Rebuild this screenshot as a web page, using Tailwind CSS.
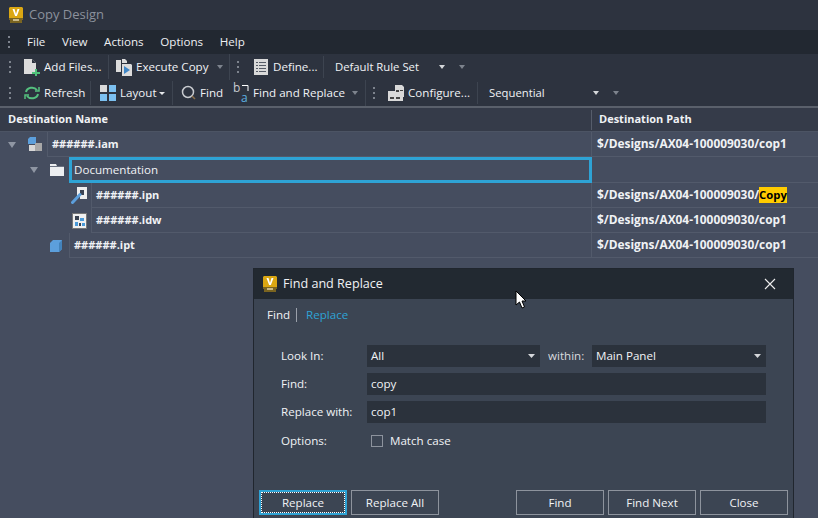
<!DOCTYPE html>
<html><head><meta charset="utf-8">
<script src="https://cdn.jsdelivr.net/npm/@tailwindcss/browser@4"></script>
</head>
<body class="w-[818px] h-[518px] overflow-hidden bg-[#454d5f] relative font-['Open_Sans','Noto_Sans',sans-serif] text-[11.6px] text-[#f0f2f5]">
<!-- title -->
<div class="h-[30px] bg-[#2d333f] flex items-center pl-[9px] gap-[6px]">
  <svg width="14" height="16" viewBox="0 0 14 16"><path d="M1 0h12l1 1v11l-1 1v2l-1 1H2l-1-1v-2l-1-1V1z" fill="#dba713"/><path d="M0 11h14v1l-1 1v2l-1 1H2l-1-1v-2l-1-1z" fill="#7a6420"/><path d="M3.500 2h2l1.500 5 1.500-5h2l-2.600 7H6.100z" fill="#fff"/><rect x="4" y="12" width="6" height="2" fill="#c9b98a"/></svg>
  <span class="text-[13px] text-[#8b919c]">Copy Design</span>
</div>
<!-- menu -->
<div class="h-[24px] bg-[#222831] flex items-center pl-[7px]">
  <svg width="4" height="12" class="mr-[16px]"><g fill="#7d838d"><rect x="1" width="2" height="2"/><rect x="1" y="5" width="2" height="2"/><rect x="1" y="10" width="2" height="2"/></g></svg>
  <div class="flex gap-[16.700px] text-[#eef0f3]"><span>File</span><span>View</span><span>Actions</span><span>Options</span><span>Help</span></div>
</div>
<!-- toolbar 1 -->
<div class="h-[26px] bg-[#2d333f] flex items-center pl-[8px] whitespace-nowrap">
  <svg width="4" height="12"><g fill="#7d838d"><rect x="1" width="2" height="2"/><rect x="1" y="5" width="2" height="2"/><rect x="1" y="10" width="2" height="2"/></g></svg>
  <svg width="16" height="17" viewBox="0 0 16 17" class="ml-[12px]"><path d="M0 0h8l4 4v11H0z" fill="#dcdcdc"/><path d="M8 0v4h4z" fill="#2d333f"/><path d="M11 10h2v3h3v2h-3v2h-2v-2H8v-2h3z" fill="#4fc27a"/></svg>
  <span class="ml-[4px] w-[57px]">Add Files...</span>
  <div class="w-px h-[24px] bg-[#3d4450] ml-[7px]"></div>
  <svg width="17" height="17" viewBox="0 0 17 17" class="ml-[7px]"><path d="M0 1h5v12H0z" fill="#dcdcdc"/><path d="M6 0h3l2 2v2H6zM6 5h9l1 1v11H6z" fill="#dcdcdc"/><path d="M8 7v8l6-4z" fill="#3f86c6"/></svg>
  <span class="ml-[3px] w-[72px]">Execute Copy</span>
  <svg width="8" height="4" class="ml-[8px]"><path d="M1 0h6L4 4z" fill="#7d838d"/></svg>
  <div class="w-px h-[26px] bg-[#3d4450] ml-[5px]"></div>
  <svg width="4" height="12" class="ml-[6px]"><g fill="#7d838d"><rect x="1" width="2" height="2"/><rect x="1" y="5" width="2" height="2"/><rect x="1" y="10" width="2" height="2"/></g></svg>
  <svg width="14" height="16" viewBox="0 0 14 16" class="ml-[14px]"><rect width="14" height="16" fill="#d9d9d9"/><g fill="#555b66"><rect x="2" y="3" width="2" height="1"/><rect x="5" y="3" width="7" height="1"/><rect x="2" y="6" width="2" height="1"/><rect x="5" y="6" width="7" height="1"/><rect x="2" y="9" width="2" height="1"/><rect x="5" y="9" width="7" height="1"/><rect x="2" y="12" width="2" height="1"/><rect x="5" y="12" width="7" height="1"/></g></svg>
  <span class="ml-[5px] w-[43px]">Define...</span>
  <div class="w-px h-[22px] bg-[#3d4450] ml-[7px]"></div>
  <span class="ml-[11px] w-[103px] text-[11.300px]">Default Rule Set</span>
  <svg width="8" height="4"><path d="M1 0h6L4 4z" fill="#d5d7da"/></svg>
  <svg width="8" height="4" class="ml-[12px]"><path d="M1 0h6L4 4z" fill="#7d838d"/></svg>
</div>
<!-- toolbar 2 -->
<div class="h-[26px] bg-[#2d333f] flex items-center pl-[8px] whitespace-nowrap">
  <svg width="4" height="12"><g fill="#7d838d"><rect x="1" width="2" height="2"/><rect x="1" y="5" width="2" height="2"/><rect x="1" y="10" width="2" height="2"/></g></svg>
  <svg width="16" height="16" viewBox="0 0 16 16" class="ml-[12px]" fill="none" stroke="#55c07f" stroke-width="2"><path d="M2 7a6 5 0 0 1 11-2"/><path d="M14 9a6 5 0 0 1-11 2"/><path d="M15 2v4h-4M1 14v-4h4" stroke-width="1.500"/></svg>
  <span class="ml-[4px] w-[39px]">Refresh</span>
  <div class="w-px h-[24px] bg-[#3d4450] ml-[7px]"></div>
  <svg width="17" height="16" viewBox="0 0 17 16" class="ml-[9px]"><rect width="7" height="7" fill="#d9d9d9"/><rect x="9" width="7" height="7" fill="#7cc0f0"/><rect y="9" width="7" height="7" fill="#7cc0f0"/><rect x="9" y="9" width="7" height="7" fill="#7cc0f0"/></svg>
  <span class="ml-[3px] w-[36px]">Layout</span>
  <svg width="6" height="3" class="ml-[3px]"><path d="M0 0h6L3 3z" fill="#e6e8eb"/></svg>
  <div class="w-px h-[24px] bg-[#3d4450] ml-[7px]"></div>
  <svg width="15" height="16" viewBox="0 0 15 16" class="ml-[8px]" fill="none"><circle cx="7" cy="7" r="5.500" stroke="#c9ccd0" stroke-width="1.500"/><path d="M11 11l3 3" stroke="#8a6f4a" stroke-width="1.500"/></svg>
  <span class="ml-[4px] w-[23px]">Find</span>
  <div class="ml-[10px] w-[17px] h-[20px] flex flex-col relative">
    <span class="leading-[10px] text-[12px] text-[#c9ccd0]">b</span>
    <span class="leading-[10px] text-[12px] text-[#5db0e0] ml-[8px]">a</span>
    <svg width="7" height="6" class="absolute left-[9px] top-[2px]" fill="none" stroke="#fff"><path d="M0 .5h6V6"/></svg>
  </div>
  <span class="ml-[3px] w-[90px]">Find and Replace</span>
  <svg width="8" height="4" class="ml-[8px]"><path d="M1 0h6L4 4z" fill="#7d838d"/></svg>
  <div class="w-px h-[26px] bg-[#3d4450] ml-[6px]"></div>
  <svg width="4" height="12" class="ml-[6px]"><g fill="#7d838d"><rect x="1" width="2" height="2"/><rect x="1" y="5" width="2" height="2"/><rect x="1" y="10" width="2" height="2"/></g></svg>
  <svg width="17" height="16" viewBox="0 0 17 16" class="ml-[12px]"><path d="M3 6h4V0h7l2 2v10H0V6z" fill="#d9d9d9"/><rect x="0" y="10" width="15" height="6" fill="#d9d9d9"/><g fill="#444"><rect x="8" y="5" width="3" height="2"/><rect x="12" y="5" width="3" height="1"/><rect x="2" y="12" width="4" height="2"/><rect x="8" y="12" width="4" height="2"/></g></svg>
  <span class="ml-[3px] w-[62px]">Configure...</span>
  <div class="w-px h-[22px] bg-[#3d4450] ml-[7px]"></div>
  <span class="ml-[11px] w-[103px] text-[11.300px]">Sequential</span>
  <svg width="8" height="4"><path d="M1 0h6L4 4z" fill="#d5d7da"/></svg>
  <svg width="8" height="4" class="ml-[12px]"><path d="M1 0h6L4 4z" fill="#7d838d"/></svg>
</div>
<!-- grid -->
<div class="border-t-2 border-[#5a606b] h-[26px] bg-[#353b49] flex items-center font-bold text-[11px] border-b border-b-[#4c5464]">
  <div class="w-[591px] pl-[8px]">Destination Name</div>
  <div class="w-px h-[20px] bg-[#565d6b]"></div>
  <div class="pl-[7px]">Destination Path</div>
</div>
<div class="font-bold">
  <div class="h-[25px] flex">
    <div class="w-[591px] flex items-center">
      <svg width="8" height="6" class="ml-[8px]"><path d="M0 0h8L4 6z" fill="#8f96a3"/></svg>
      <svg width="14" height="15" viewBox="0 0 14 15" class="ml-[12px]"><path d="M0 2l2-2h6v7H0z" fill="#5c9fdc"/><rect x="1" y="8" width="6" height="6" fill="#d8d8d8"/><rect x="7" y="6" width="7" height="8" fill="#a8a8a8"/></svg>
      <div class="ml-[5px] h-full flex-1 flex items-center pl-[4px] border-l border-b border-[#525a6b] text-[11px]">######.iam</div>
    </div>
    <div class="flex-1 border-l border-b border-[#525a6b] flex items-center pl-[5px] text-[11.9px]">$/Designs/AX04-100009030/cop1</div>
  </div>
  <div class="h-[26px] flex">
    <div class="w-[592px] flex items-center">
      <svg width="8" height="6" class="ml-[30px]"><path d="M0 0h8L4 6z" fill="#8f96a3"/></svg>
      <svg width="14" height="12" viewBox="0 0 14 12" class="ml-[12px]"><path d="M0 0h6l1 2h7v10H0z" fill="#eceef0"/><rect y="2" width="14" height="1" fill="#6a7180"/></svg>
      <div class="ml-[5px] h-full flex-1 flex items-center pl-[2px] font-normal border-[3px] border-[#2ea3d5]">Documentation</div>
    </div>
    <div class="flex-1 border-b border-[#525a6b]"></div>
  </div>
  <div class="h-[25px] flex">
    <div class="w-[591px] flex items-center">
      <svg width="16" height="17" viewBox="0 0 16 17" class="ml-[71px]"><path d="M6 0h10v12H9V9H6z" fill="#eee"/><path d="M9 3h4v5H9z" fill="#3b4352"/><path d="M1.500 15.500L9 7.500" stroke="#5c9fdc" stroke-width="3" stroke-linecap="round"/></svg>
      <div class="ml-[4px] h-full flex-1 flex items-center pl-[4px] border-l border-b border-[#525a6b] text-[11px]">######.ipn</div>
    </div>
    <div class="flex-1 border-l border-b border-[#525a6b] flex items-center pl-[5px] text-[11.9px]">$/Designs/AX04-100009030/<span class="bg-[#ffcc00] text-black text-[11.300px]">Copy</span></div>
  </div>
  <div class="h-[25px] flex">
    <div class="w-[591px] flex items-center">
      <svg width="15" height="16" viewBox="0 0 15 16" class="ml-[72px]"><rect x=".5" y=".5" width="14" height="15" fill="#f0f0f0" stroke="#777"/><rect x="3" y="3" width="4" height="4" fill="#3a4250"/><rect x="8" y="5" width="4" height="3" fill="#4a9ad8"/><rect x="3" y="9" width="3" height="4" fill="#4a9ad8"/><rect x="7" y="10" width="2" height="3" fill="#3a4250"/><rect x="10" y="10" width="3" height="3" fill="#4a9ad8"/></svg>
      <div class="ml-[4px] h-full flex-1 flex items-center pl-[4px] border-l border-b border-[#525a6b] text-[11px]">######.idw</div>
    </div>
    <div class="flex-1 border-l border-b border-[#525a6b] flex items-center pl-[5px] text-[11.9px]">$/Designs/AX04-100009030/cop1</div>
  </div>
  <div class="h-[25px] flex">
    <div class="w-[591px] flex items-center">
      <svg width="12" height="12" viewBox="0 0 12 12" class="ml-[50px]"><path d="M3 0h9v9l-3 3H0V3z" fill="#5c9fdc"/><path d="M9 3h3V0zM9 3v9l3-3V0z" fill="#4383bb"/></svg>
      <div class="ml-[7px] h-full flex-1 flex items-center pl-[4px] border-l border-b border-[#525a6b] text-[11px]">######.ipt</div>
    </div>
    <div class="flex-1 border-l border-b border-[#525a6b] flex items-center pl-[5px] text-[11.9px]">$/Designs/AX04-100009030/cop1</div>
  </div>
</div>
<!-- dialog -->
<div class="absolute left-[253px] top-[268px] w-[541px] h-[260px] bg-[#3c4553] border border-[#20262e] flex flex-col">
  <div class="h-[30px] bg-[#222931] flex items-center pl-[9px] shrink-0">
    <svg width="14" height="16" viewBox="0 0 14 16"><path d="M1 0h12l1 1v11l-1 1v2l-1 1H2l-1-1v-2l-1-1V1z" fill="#dba713"/><path d="M0 11h14v1l-1 1v2l-1 1H2l-1-1v-2l-1-1z" fill="#7a6420"/><path d="M3.500 2h2l1.500 5 1.500-5h2l-2.600 7H6.100z" fill="#fff"/><rect x="4" y="12" width="6" height="2" fill="#c9b98a"/></svg>
    <span class="ml-[6px] text-[12.600px] mt-[1px]">Find and Replace</span>
    <svg width="12" height="12" viewBox="0 0 12 12" class="ml-auto mr-[17px]" stroke="#eee" stroke-width="1.100"><path d="M1 1l10 10M11 1L1 11"/></svg>
  </div>
  <div class="flex items-center pl-[13px] mt-[8px] h-[16px]">
    <span class="w-[23px]">Find</span><div class="w-px h-[14px] bg-[#9aa0aa] ml-[6px]"></div><span class="ml-[9px] text-[#2ea3d5]">Replace</span>
  </div>
  <div class="ml-[27px] mt-[22px] flex flex-col">
    <div class="flex items-center h-[22px]">
      <span class="w-[86px]">Look In:</span>
      <div class="w-[173px] h-[22px] bg-[#2b323c] flex items-center justify-between pl-[4px] pr-[5px]"><span>All</span><svg width="7" height="4"><path d="M0 0h7L3.500 4z" fill="#d5d7da"/></svg></div>
      <span class="ml-[8px] w-[44px] text-[#d8dbdf]">within:</span>
      <div class="w-[174px] h-[22px] bg-[#2b323c] flex items-center justify-between pl-[4px] pr-[5px]"><span>Main Panel</span><svg width="7" height="4"><path d="M0 0h7L3.500 4z" fill="#d5d7da"/></svg></div>
    </div>
    <div class="flex items-center h-[22px] mt-[6px]">
      <span class="w-[86px]">Find:</span>
      <div class="w-[399px] h-[22px] bg-[#2b323c] flex items-center pl-[4px]">copy</div>
    </div>
    <div class="flex items-center h-[22px] mt-[6px]">
      <span class="w-[86px]">Replace with:</span>
      <div class="w-[399px] h-[22px] bg-[#2b323c] flex items-center pl-[4px]">cop1</div>
    </div>
    <div class="flex items-center h-[22px] mt-[7px]">
      <span class="w-[90px]">Options:</span>
      <div class="w-[12px] h-[12px] border border-[#8d939d]"></div>
      <span class="ml-[7px]">Match case</span>
    </div>
  </div>
  <div class="absolute left-[5px] top-[221px] right-[5px] flex h-[25px]">
    <div class="w-[88px] border-2 border-[#2ea3d5] flex items-center justify-center"><div class="w-full h-full border border-dotted border-white flex items-center justify-center">Replace</div></div>
    <div class="w-[88px] ml-[4px] border border-[#8d939d] flex items-center justify-center">Replace All</div>
    <div class="w-[88px] ml-auto border border-[#8d939d] flex items-center justify-center">Find</div>
    <div class="w-[88px] ml-[4px] border border-[#8d939d] flex items-center justify-center">Find Next</div>
    <div class="w-[88px] ml-[4px] border border-[#8d939d] flex items-center justify-center">Close</div>
  </div>
</div>
<!-- cursor -->
<svg class="absolute left-[515px] top-[290px]" width="13" height="19" viewBox="0 0 13 19"><path d="M1 1v14l3.500-3 2.500 6 2.500-1-2.500-6H11z" fill="#fff" stroke="#000"/></svg>
</body></html>
